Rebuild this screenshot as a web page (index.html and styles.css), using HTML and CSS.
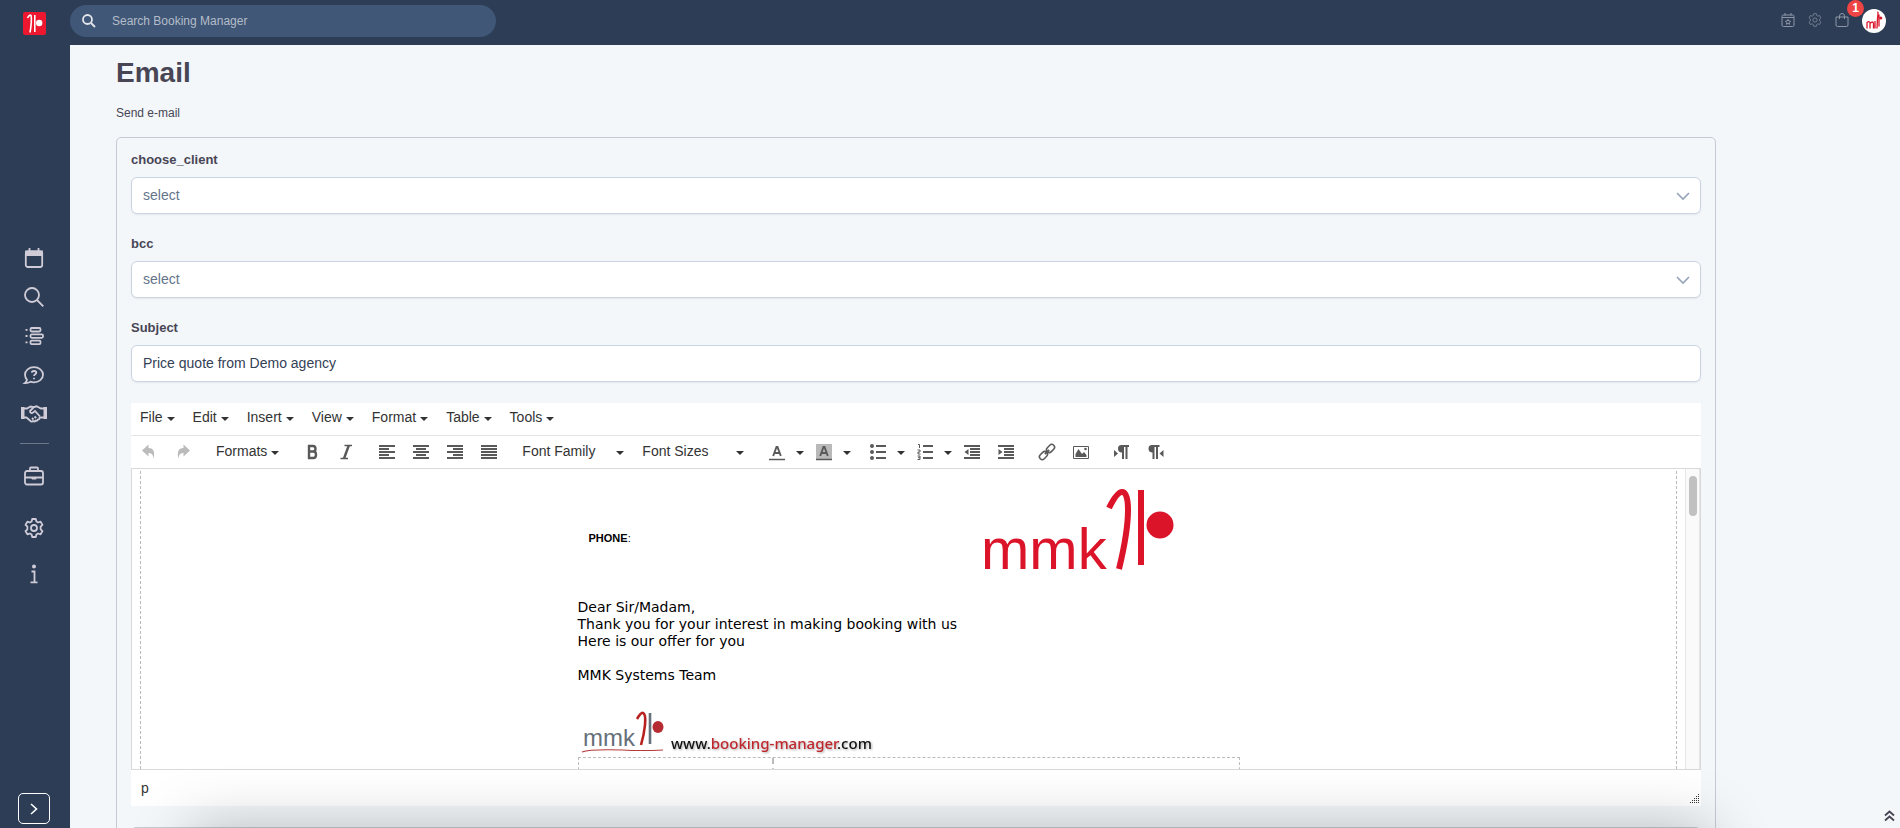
FILE: index.html
```html
<!DOCTYPE html>
<html lang="en">
<head>
<meta charset="utf-8">
<title>Email - Booking Manager</title>
<link rel="stylesheet" href="styles.css">
</head>
<body>
<svg class="defs" width="0" height="0" aria-hidden="true">
  <symbol id="gear" viewBox="0 0 20 20"><path d="M8.200 1h3.600l.6 2.500 1.700 1 2.500-.8 1.900 3.200-1.900 1.800v2.600l1.900 1.800-1.900 3.200-2.500-.8-1.700 1-.6 2.500H8.200l-.6-2.500-1.700-1-2.500.8-1.900-3.200 1.900-1.800V8.700L1.500 6.900l1.900-3.200 2.500.8 1.700-1z" stroke-linejoin="round"/><circle cx="10" cy="10" r="3"/></symbol>
</svg>
<div class="app">
  <aside class="sidebar">
    <a class="brand" href="#" aria-label="MMK">
      <svg width="23" height="23" viewBox="0 0 23 23"><rect width="23" height="23" rx="2" fill="#ed1730"/><g fill="none" stroke="#fff"><path d="M4.500 6C6 3 8 1.800 8.300 5c.3 5-.3 10-1.300 15.500" stroke-width="1.600"/><path d="M11.800 3v17" stroke-width="1.600"/></g><circle cx="16.200" cy="11" r="3.200" fill="#fff"/></svg>
    </a>
    <nav class="nav" aria-label="Main">
      <a href="#" aria-label="Calendar"><svg width="20" height="20" viewBox="0 0 20 20"><rect x="1.800" y="3.500" width="16.400" height="15.500" rx="2"/><path d="M2 3.500h16V7H2z" fill="currentColor"/><path d="M5.500 0v4M14.500 0v4"/></svg></a>
      <a href="#" aria-label="Search"><svg width="20" height="20" viewBox="0 0 20 20"><circle cx="8" cy="8" r="7"/><path d="m13 13 6.300 6.300"/></svg></a>
      <a href="#" aria-label="List"><svg width="20" height="20" viewBox="0 0 20 20"><rect x="6.500" y="2" width="10" height="3.500" rx="1.200"/><rect x="6.500" y="8.300" width="12.500" height="3.500" rx="1.200"/><rect x="6.500" y="14.600" width="10" height="3.500" rx="1.200"/><path d="M1.500 3.800h2M1.500 10h2M1.500 16.300h2"/></svg></a>
      <a href="#" aria-label="Help"><svg width="20" height="20" viewBox="0 0 20 20"><path d="M1 18c1.300-.8 1.700-1.800 2-3.200C1.700 13.300 1 11.700 1 9.800 1 5.500 5 2.200 10 2.200s9 3.300 9 7.600-4 7.500-9 7.500c-1.300 0-2.500-.2-3.500-.6C5 17.600 3 18.200 1 18z"/><path d="M7.700 7.700c.2-2.300 4.600-2.300 4.600.1 0 1.500-2.300 1.500-2.300 3.200M10 12.700v1.500"/></svg></a>
      <a href="#" aria-label="Partners"><svg width="26" height="20" viewBox="0 0 26 20"><path d="M0 3h3.500v12H0zM22.500 3H26v12h-3.500z" fill="currentColor" stroke="none"/><path d="M3 4.500h3L9.500 2.500l3 .7 3-.9 4.500 2.200h3M3 13.500h2.500l4 3.500c1 .8 2 .6 2.500 0 1 .7 2 .4 2.600-.4 1 .4 1.900 0 2.200-.9 1.200 0 1.900-.7 1.700-1.800l1.500-.4H23M12.500 3.500 9 7c-.3 2 1.800 2.600 3.300 1.400l1.700-1.400 5 5.500"/><path d="m11 14 1.500 1.500M13.500 12.500l1.700 1.700"/></svg></a>
      <hr>
      <a class="work" href="#" aria-label="Business"><svg width="20" height="20" viewBox="0 0 20 20"><rect x="1" y="5" width="18" height="13.500" rx="2"/><path d="M6 5V2.500Q6 1.500 7 1.500h6q1 0 1 1V5M1 11.500h18"/><path d="M7.500 11h5v1.500q0 1-1 1h-3q-1 0-1-1z" fill="currentColor" stroke="none"/></svg></a>
      <a class="settings" href="#" aria-label="Settings"><svg width="20" height="20"><use href="#gear"/></svg></a>
      <a class="info" href="#" aria-label="Information"><svg width="20" height="20" viewBox="0 0 20 20"><circle cx="10" cy="2.500" r="2" fill="currentColor" stroke="none"/><path d="M7.500 7.500h3V18M6.500 18.300h7"/></svg></a>
    </nav>
    <button class="expand" type="button" aria-label="Expand menu"><svg width="10" height="12" viewBox="0 0 10 12"><path d="m2 1 5.500 5L2 11"/></svg></button>
  </aside>

  <div class="main">
    <header class="topbar">
      <label class="search">
        <svg width="14" height="14" viewBox="0 0 14 14"><circle cx="5.500" cy="5.500" r="4.500"/><path d="m9 9 4 4"/></svg>
        <input type="search" placeholder="Search Booking Manager" aria-label="Search Booking Manager">
      </label>
      <div class="actions">
        <button type="button" aria-label="Bookmarked dates"><svg width="14" height="14" viewBox="0 0 14 14"><rect x="1" y="2" width="12" height="11.500" rx="1.500"/><path d="M1 4.500h12M4 0v2.500M10 0v2.500M7 6.300l.8 1.700 1.800.2-1.300 1.300.3 1.800L7 10.400l-1.600.9.3-1.800-1.300-1.300 1.800-.2z"/></svg></button>
        <button type="button" aria-label="Settings"><svg width="14" height="14"><use href="#gear"/></svg></button>
        <button class="bag" type="button" aria-label="Basket"><svg width="14" height="14" viewBox="0 0 14 14"><path d="M1 4h12v8q0 1.500-1.500 1.500h-9Q1 13.500 1 12zM4.500 6V3Q4.500.500 7 .500T9.500 3v3"/></svg><span class="badge">1</span></button>
        <button class="avatar" type="button" aria-label="Account"><svg width="24" height="24" viewBox="0 0 24 24"><circle cx="12" cy="12" r="12" fill="#fff"/><g fill="none" stroke="#d8152a"><path d="M5 19.500v-6q3-2 3 1v5-5q3-3 3.500 0v5M13 12v7.500M15.500 3.500q1-2 0 6l-.5 10M17 5.500v12" stroke-width="1.300"/></g><circle cx="18.700" cy="9" r="1.600" fill="#d8152a"/></svg></button>
      </div>
    </header>

    <main class="page">
      <h1>Email</h1>
      <p class="lead">Send e-mail</p>
      <form class="panel">
        <div class="field">
          <label for="client">choose_client</label>
          <div class="pick"><select id="client"><option>select</option></select><svg width="14" height="8" viewBox="0 0 14 8"><path d="m1 1 6 6 6-6"/></svg></div>
        </div>
        <div class="field">
          <label for="bcc">bcc</label>
          <div class="pick"><select id="bcc"><option>select</option></select><svg width="14" height="8" viewBox="0 0 14 8"><path d="m1 1 6 6 6-6"/></svg></div>
        </div>
        <div class="field">
          <label for="subject">Subject</label>
          <input id="subject" type="text" value="Price quote from Demo agency">
        </div>

        <section class="editor" aria-label="Message editor">
          <div class="menubar">
            <button type="button">File<i></i></button><button type="button">Edit<i></i></button><button type="button">Insert<i></i></button><button type="button">View<i></i></button><button type="button">Format<i></i></button><button type="button">Table<i></i></button><button type="button">Tools<i></i></button>
          </div>
          <div class="toolbar">
            <div class="group off">
              <button class="tool" type="button" aria-label="Undo"><svg width="16" height="16" viewBox="0 0 16 16"><path class="solid" d="M1 6.500 7.500.5v3.500c5.500 0 6.500 4 5 11-.3-4-1.500-6-5-6v3.500z"/></svg></button>
              <button class="tool" type="button" aria-label="Redo"><svg width="16" height="16" viewBox="0 0 16 16"><path class="solid" d="M15 6.500 8.500.5v3.500c-5.500 0-6.500 4-5 11 .3-4 1.500-6 5-6v3.500z"/></svg></button>
            </div>
            <div class="group"><button type="button">Formats<i></i></button></div>
            <div class="group">
              <button class="tool" type="button" aria-label="Bold"><svg width="16" height="16" viewBox="0 0 16 16"><path d="M5 2h4q2.500 0 2.500 2.700T9 7.500H5zM5 7.500h4.500Q12 7.500 12 10.700T9.500 14H5z" stroke-width="2.400"/></svg></button>
              <button class="tool" type="button" aria-label="Italic"><svg width="16" height="16" viewBox="0 0 16 16"><path d="M6.500 1.500H14M2.500 14.500H10"/><path d="M10.800 1.500 6 14.500" stroke-width="2.400"/></svg></button>
            </div>
            <div class="group">
              <button class="tool" type="button" aria-label="Align left"><svg width="16" height="16" viewBox="0 0 16 16"><path class="bar" d="M0 2h16M0 5h10M0 8h16M0 11h10M0 14h16"/></svg></button>
              <button class="tool" type="button" aria-label="Align center"><svg width="16" height="16" viewBox="0 0 16 16"><path class="bar" d="M0 2h16M3 5h10M0 8h16M3 11h10M0 14h16"/></svg></button>
              <button class="tool" type="button" aria-label="Align right"><svg width="16" height="16" viewBox="0 0 16 16"><path class="bar" d="M0 2h16M6 5h10M0 8h16M6 11h10M0 14h16"/></svg></button>
              <button class="tool" type="button" aria-label="Justify"><svg width="16" height="16" viewBox="0 0 16 16"><path class="bar" d="M0 2h16M0 5h16M0 8h16M0 11h16M0 14h16"/></svg></button>
            </div>
            <div class="group"><button class="wide" type="button">Font Family<i></i></button><button class="wide" type="button">Font Sizes<i></i></button></div>
            <div class="group">
              <button class="tool" type="button" aria-label="Text color"><svg width="16" height="16" viewBox="0 0 16 16"><path d="m4.200 12 3.300-9h1l3.300 9M5.500 9h5" stroke-width="1.900"/><path d="M0 15.500h16" stroke-width="1.500"/></svg></button><button class="drop" type="button" aria-label="Text color options"><i></i></button>
              <button class="tool" type="button" aria-label="Background color"><svg width="16" height="16" viewBox="0 0 16 16"><path class="tint" d="M0 0h16v16H0z"/><path d="m4.200 12 3.300-9h1l3.300 9M5.500 9h5" stroke-width="1.900"/><path d="M0 15.500h16" stroke-width="1.500"/></svg></button><button class="drop" type="button" aria-label="Background color options"><i></i></button>
            </div>
            <div class="group">
              <button class="tool" type="button" aria-label="Bullet list"><svg width="16" height="16" viewBox="0 0 16 16"><path class="bar" d="M6 2h10M6 8h10M6 14h10"/><g class="solid"><circle cx="2" cy="2" r="2"/><circle cx="2" cy="8" r="2"/><circle cx="2" cy="14" r="2"/></g></svg></button><button class="drop" type="button" aria-label="Bullet list options"><i></i></button>
              <button class="tool" type="button" aria-label="Numbered list"><svg width="16" height="16" viewBox="0 0 16 16"><path class="bar" d="M6 2h10M6 8h10M6 14h10"/><path d="M1 .5h1.500V4M.5 6h2.500v2H1v2h2.500M.5 12h2.500v3.500H.5M1 13.700h2" stroke-width="1"/></svg></button><button class="drop" type="button" aria-label="Numbered list options"><i></i></button>
              <button class="tool" type="button" aria-label="Decrease indent"><svg width="16" height="16" viewBox="0 0 16 16"><path class="bar" d="M0 2h16M6 5h10M6 8h10M6 11h10M0 14h16"/><path class="solid" d="M4.500 5v6L.5 8z"/></svg></button>
              <button class="tool" type="button" aria-label="Increase indent"><svg width="16" height="16" viewBox="0 0 16 16"><path class="bar" d="M0 2h16M6 5h10M6 8h10M6 11h10M0 14h16"/><path class="solid" d="M.5 5v6l4-3z"/></svg></button>
            </div>
            <div class="group">
              <button class="tool" type="button" aria-label="Insert link"><svg width="16" height="16" viewBox="0 0 16 16"><g transform="rotate(-45 8 8)"><rect x="-1.500" y="5.200" width="9" height="5.600" rx="2.800"/><rect x="8.500" y="5.200" width="9" height="5.600" rx="2.800"/><path d="M5 8h6" stroke-width="1.800"/></g></svg></button>
              <button class="tool" type="button" aria-label="Insert image"><svg width="16" height="16" viewBox="0 0 16 16"><path d="M.5 2.500h15v12H.5z" stroke-width="1"/><path class="solid" d="M2.500 13V10l3-5 3.500 5 2-2 2.500 3v2z"/><circle class="solid" cx="12.500" cy="5" r="1.300"/></svg></button>
            </div>
            <div class="group">
              <button class="tool" type="button" aria-label="Left to right"><svg width="16" height="16" viewBox="0 0 16 16"><path class="solid" d="M7.500 1H15v2h-1.500v12h-2V3H10v12H8V8.500Q4 8.500 4 4.700T7.500 1zM0 6v7l4-3.500z"/></svg></button>
              <button class="tool" type="button" aria-label="Right to left"><svg width="16" height="16" viewBox="0 0 16 16"><path class="solid" d="M4 1h7.500v2H10v12H8V3H6.500v12h-2V8.500Q.5 8.500.5 4.700T4 1zM15.500 6v7l-4-3.500z"/></svg></button>
            </div>
          </div>
          <div class="canvas">
            <div class="frame">
              <article class="mail">
                <div class="mailhead">
                  <p class="phone"><b>PHONE</b>:</p>
                  <svg class="logo" width="196" height="82" viewBox="0 0 196 82"><text class="mmk" x="0" y="80">mmk</text><g fill="none" stroke="#dc1429"><path d="M128 19q8-16 13-16 6 0 6 18 0 22-9 59" stroke-width="6"/><path d="M160 1v75" stroke-width="6"/></g><circle cx="179" cy="36" r="13.500" fill="#dc1429"/></svg>
                </div>
                <p class="body">Dear Sir/Madam,<br>Thank you for your interest in making booking with us<br>Here is our offer for you<br><br>MMK Systems Team</p>
                <svg class="signature" width="300" height="43" viewBox="0 0 300 43"><text class="sm" x="5" y="35">mmk</text><g fill="none"><path d="M59 8q4-7 6-6 3 1 2 12-1 10-4 20" stroke="#b7211f" stroke-width="2.600"/><path d="M72 2v31" stroke="#66707a" stroke-width="2.600"/><path d="M4 41q8-3 40-2 20 1 41 0" stroke="#b5383a" stroke-width="1.200"/></g><ellipse cx="80" cy="16" rx="5.500" ry="6" fill="#b52c33"/><text class="url" x="93" y="38">www.<tspan>booking-manager</tspan>.com</text></svg>
                <table class="grid"><tbody><tr><td></td><td></td></tr></tbody></table>
              </article>
            </div>
            <div class="scroll"><div class="thumb"></div></div>
          </div>
          <div class="status"><span>p</span><svg width="10" height="10" viewBox="0 0 10 10"><path d="M9 0h1v1H9zM7 2h1v1H7zM9 2h1v1H9zM5 4h1v1H5zM7 4h1v1H7zM9 4h1v1H9zM3 6h1v1H3zM5 6h1v1H5zM7 6h1v1H7zM9 6h1v1H9zM1 8h1v1H1zM3 8h1v1H3zM5 8h1v1H5zM7 8h1v1H7zM9 8h1v1H9z"/></svg></div>
        </section>
        <div class="next"></div>
      </form>
    </main>
  </div>
</div>
<div class="sheet"></div>
<button class="totop" type="button" aria-label="Back to top"><svg width="11" height="12" viewBox="0 0 11 12"><path d="m1 5.500 4.500-4 4.500 4M1 10.500l4.500-4 4.500 4"/></svg></button>
</body>
</html>
```
FILE: styles.css
```css
* { box-sizing: border-box; }
body { margin: 0; background: #f3f7fa; color: #484554; font-family: "Liberation Sans", Arial, sans-serif; font-size: 14px; }
h1, p { margin: 0; }
button, input, select { font: inherit; color: inherit; margin: 0; }
button { border: 0; background: none; padding: 0; cursor: pointer; }
svg { display: block; flex: none; overflow: visible; fill: none; stroke: currentColor; }
.defs { position: absolute; }
.app { display: flex; height: 100vh; overflow: hidden; }

.sidebar { width: 70px; flex: none; background: #2c3d55; color: #cfccd8; display: flex; flex-direction: column; padding: 12px 0 4px; }
.brand { margin-left: 23px; }
.brand svg, .logo, .signature, .avatar svg { stroke: none; }
.nav { margin-top: 213px; margin-right: 2px; display: flex; flex-direction: column; align-items: center; gap: 19px; }
.nav a { color: inherit; }
.nav svg { stroke-width: 1.8px; }
.nav hr { width: 29px; height: 1px; border: 0; margin: 0; background: #6c7889; }
.nav .work { margin-top: 3px; }
.nav .settings { margin-top: 13px; }
.nav .info { margin-top: 7px; }
.expand { margin-top: auto; margin-left: 18px; width: 32px; height: 31px; border: 1px solid #fff; border-radius: 5px; display: grid; place-items: center; color: #fff; }
.expand svg { stroke-width: 1.6px; }

.main { flex: 1; min-width: 0; }
.topbar { height: 45px; background: #2c3d55; display: flex; justify-content: space-between; padding: 5px 14px 0 0; }
.search { width: 426px; height: 32px; border-radius: 16px; background: #405777; display: flex; align-items: center; gap: 16px; padding: 0 12px; color: #e3e6ec; }
.search svg { stroke-width: 1.8px; }
.search input { flex: 1; min-width: 0; border: 0; padding: 0; background: none; outline: 0; font-size: 12px; appearance: none; }
.search input::placeholder { color: #b4bdc9; opacity: 1; }
.actions { display: flex; align-items: flex-start; gap: 13px; color: #8e97a8; padding-top: 8px; }
.actions svg { stroke-width: 1px; }
.bag { position: relative; }
.badge { position: absolute; left: 12px; top: -13px; width: 17px; height: 17px; border-radius: 50%; background: #ef4444; color: #fff; font-size: 12px; line-height: 17px; font-weight: 700; }
.avatar { margin-top: -4px; }

.page { padding: 12px 46px 0; }
.page > * { max-width: 1600px; }
h1 { font-size: 28px; line-height: 32px; }
.lead { font-size: 12px; line-height: 16px; margin-top: 16px; }
.panel { margin-top: 16px; border: 1px solid #c5cbd3; border-radius: 5px; padding: 13px 14px; }
.field { display: grid; gap: 8px; margin-bottom: 21px; }
.field label { font-size: 13px; line-height: 18px; font-weight: 700; }
.field input, .field select { width: 100%; height: 37px; border: 1px solid #cbd5e1; border-radius: 6px; background: #fff; padding: 0 11px 2px; color: #334155; appearance: none; box-shadow: 0 1px 2px rgba(15, 23, 42, .06); outline: 0; }
.field select { color: #64748b; }
.pick { display: grid; align-items: center; }
.pick > * { grid-area: 1 / 1; }
.pick svg { justify-self: end; margin-right: 11px; color: #94a3b8; stroke-width: 1.6px; pointer-events: none; }

.editor { background: #fff; color: #333; }
.editor i { width: 0; height: 0; border: 4px solid transparent; border-top-color: currentColor; border-bottom: 0; margin-left: 4px; margin-top: 3px; }
.menubar button, .toolbar button { display: flex; align-items: center; padding: 0 9px; white-space: nowrap; }
.menubar { display: flex; height: 33px; padding: 0 0 4px; border-bottom: 1px solid #e5e5e5; }
.toolbar { display: flex; gap: 7px; height: 32px; padding-left: 1px; }
.group { display: flex; padding-bottom: 2px; }
.toolbar .tool { color: #595959; padding-top: 2px; }
.toolbar .off .tool { color: #bbb; }
.toolbar .wide { width: 120px; justify-content: space-between; }
.toolbar .drop { width: 13px; padding: 0 2px; color: #333; }
.toolbar .drop i { margin-left: 0; }
.tool svg { stroke-width: 1.5px; }
.tool .bar { stroke-width: 2px; }
.tool .solid { fill: currentColor; stroke: none; }
.tool .tint { fill: #b9b9b9; stroke: none; }
.canvas { display: flex; height: 302px; border: 1px solid #d9d9d9; overflow: hidden; }
.frame { flex: 1; margin: 2px 8px 0; border: 1px dashed #bbb; border-width: 0 1px; color: #000; }
.mail { width: 662px; margin: 0 auto; }
.mailhead { display: flex; justify-content: space-between; padding: 18px 63px 0 11px; }
.phone { font-size: 11px; line-height: 14px; padding-top: 42px; }
.mmk { font: 58px "Liberation Sans", Arial, sans-serif; fill: #dc1429; }
.body { margin-top: 28px; font: 14px/17px "DejaVu Sans", Verdana, sans-serif; }
.signature { margin-top: 27px; }
.sm { font: 24px "Liberation Sans", Arial, sans-serif; fill: #66707a; }
.url { font: 500 15px "Noto Sans", sans-serif; fill: #111; filter: drop-shadow(1px 1px 1px rgba(0, 0, 0, .35)); }
.url tspan { fill: #c0272d; }
.grid { width: 100%; height: 80px; margin-top: 3px; border-spacing: 0; border: 1px dashed #bbb; }
.grid td { padding: 0; border-left: 2px dashed #bbb; }
.grid td:first-child { width: 193px; border-left: 0; }
.scroll { width: 15px; background: #fafafa; border: 1px solid #e5e5e5; border-width: 0 1px; padding: 7px 2px 0 3px; }
.thumb { height: 40px; border-radius: 4px; background: #c1c1c1; }
.status { display: flex; justify-content: space-between; height: 36px; padding: 0 2px 2px 10px; }
.status span { line-height: 36px; }
.status svg { align-self: flex-end; fill: #333; stroke: none; }
.next { margin-top: 21px; height: 60px; border: 1px solid #c5cbd3; border-radius: 5px; }

.sheet { position: fixed; left: 190px; right: 190px; top: 100%; height: 100px; box-shadow: 0 0 60px rgba(0, 0, 0, .25); }
.totop { position: fixed; right: 5px; bottom: 6px; color: #484554; }
.totop svg { stroke-width: 1.8px; }
```
